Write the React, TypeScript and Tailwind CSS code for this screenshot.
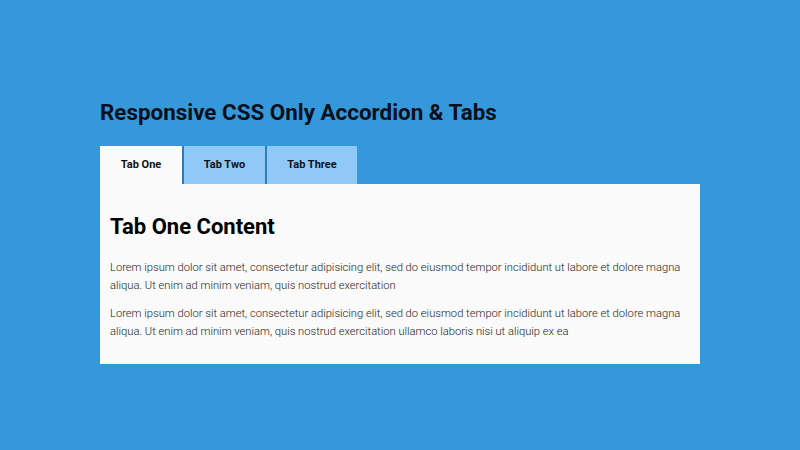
import React from 'react';

const tabs = [
  { label: 'Tab One', w: 'w-[82px]' },
  { label: 'Tab Two', w: 'w-[83px]' },
  { label: 'Tab Three', w: 'w-[92px]' },
];

const para1 =
  'Lorem ipsum dolor sit amet, consectetur adipisicing elit, sed do eiusmod tempor incididunt ut labore et dolore magna aliqua. Ut enim ad minim veniam, quis nostrud exercitation';
const para2 =
  'Lorem ipsum dolor sit amet, consectetur adipisicing elit, sed do eiusmod tempor incididunt ut labore et dolore magna aliqua. Ut enim ad minim veniam, quis nostrud exercitation ullamco laboris nisi ut aliquip ex ea';

export default function App() {
  const active = 0;

  return (
    <div
      className="w-[800px] h-[450px] bg-[#3498db] pt-[98px]"
      style={{ fontFamily: 'Roboto, "Liberation Sans", sans-serif' }}
    >
      <div className="w-[600px] mx-auto">
        <h1 className="text-[22.4px] leading-[28px] font-bold text-[#0a0f1a]">
          Responsive CSS Only Accordion &amp; Tabs
        </h1>

        {/* tab strip */}
        <div className="flex mt-[20px]">
          {tabs.map((t, i) => (
            <div
              key={t.label}
              className={`${t.w} h-[38px] flex items-center justify-center whitespace-nowrap text-[11px] font-bold text-[#111] ${
                i > 0 ? 'border-l-2 border-[#2c7dbd]' : ''
              } ${i === active ? 'bg-[#fafafa]' : 'bg-[#90c8f8]'}`}
            >
              {t.label}
            </div>
          ))}
        </div>

        {/* panel */}
        <div className="bg-[#fafafa] h-[180px] px-[10px] pt-[29px]">
          <h2 className="text-[22px] leading-[28px] font-bold text-black">Tab One Content</h2>
          <p className="mt-[18px] text-[11.2px] leading-[18px] font-light text-[#222]">{para1}</p>
          <p className="mt-[10px] text-[11.2px] leading-[18px] font-light text-[#222]">{para2}</p>
        </div>
      </div>
    </div>
  );
}
